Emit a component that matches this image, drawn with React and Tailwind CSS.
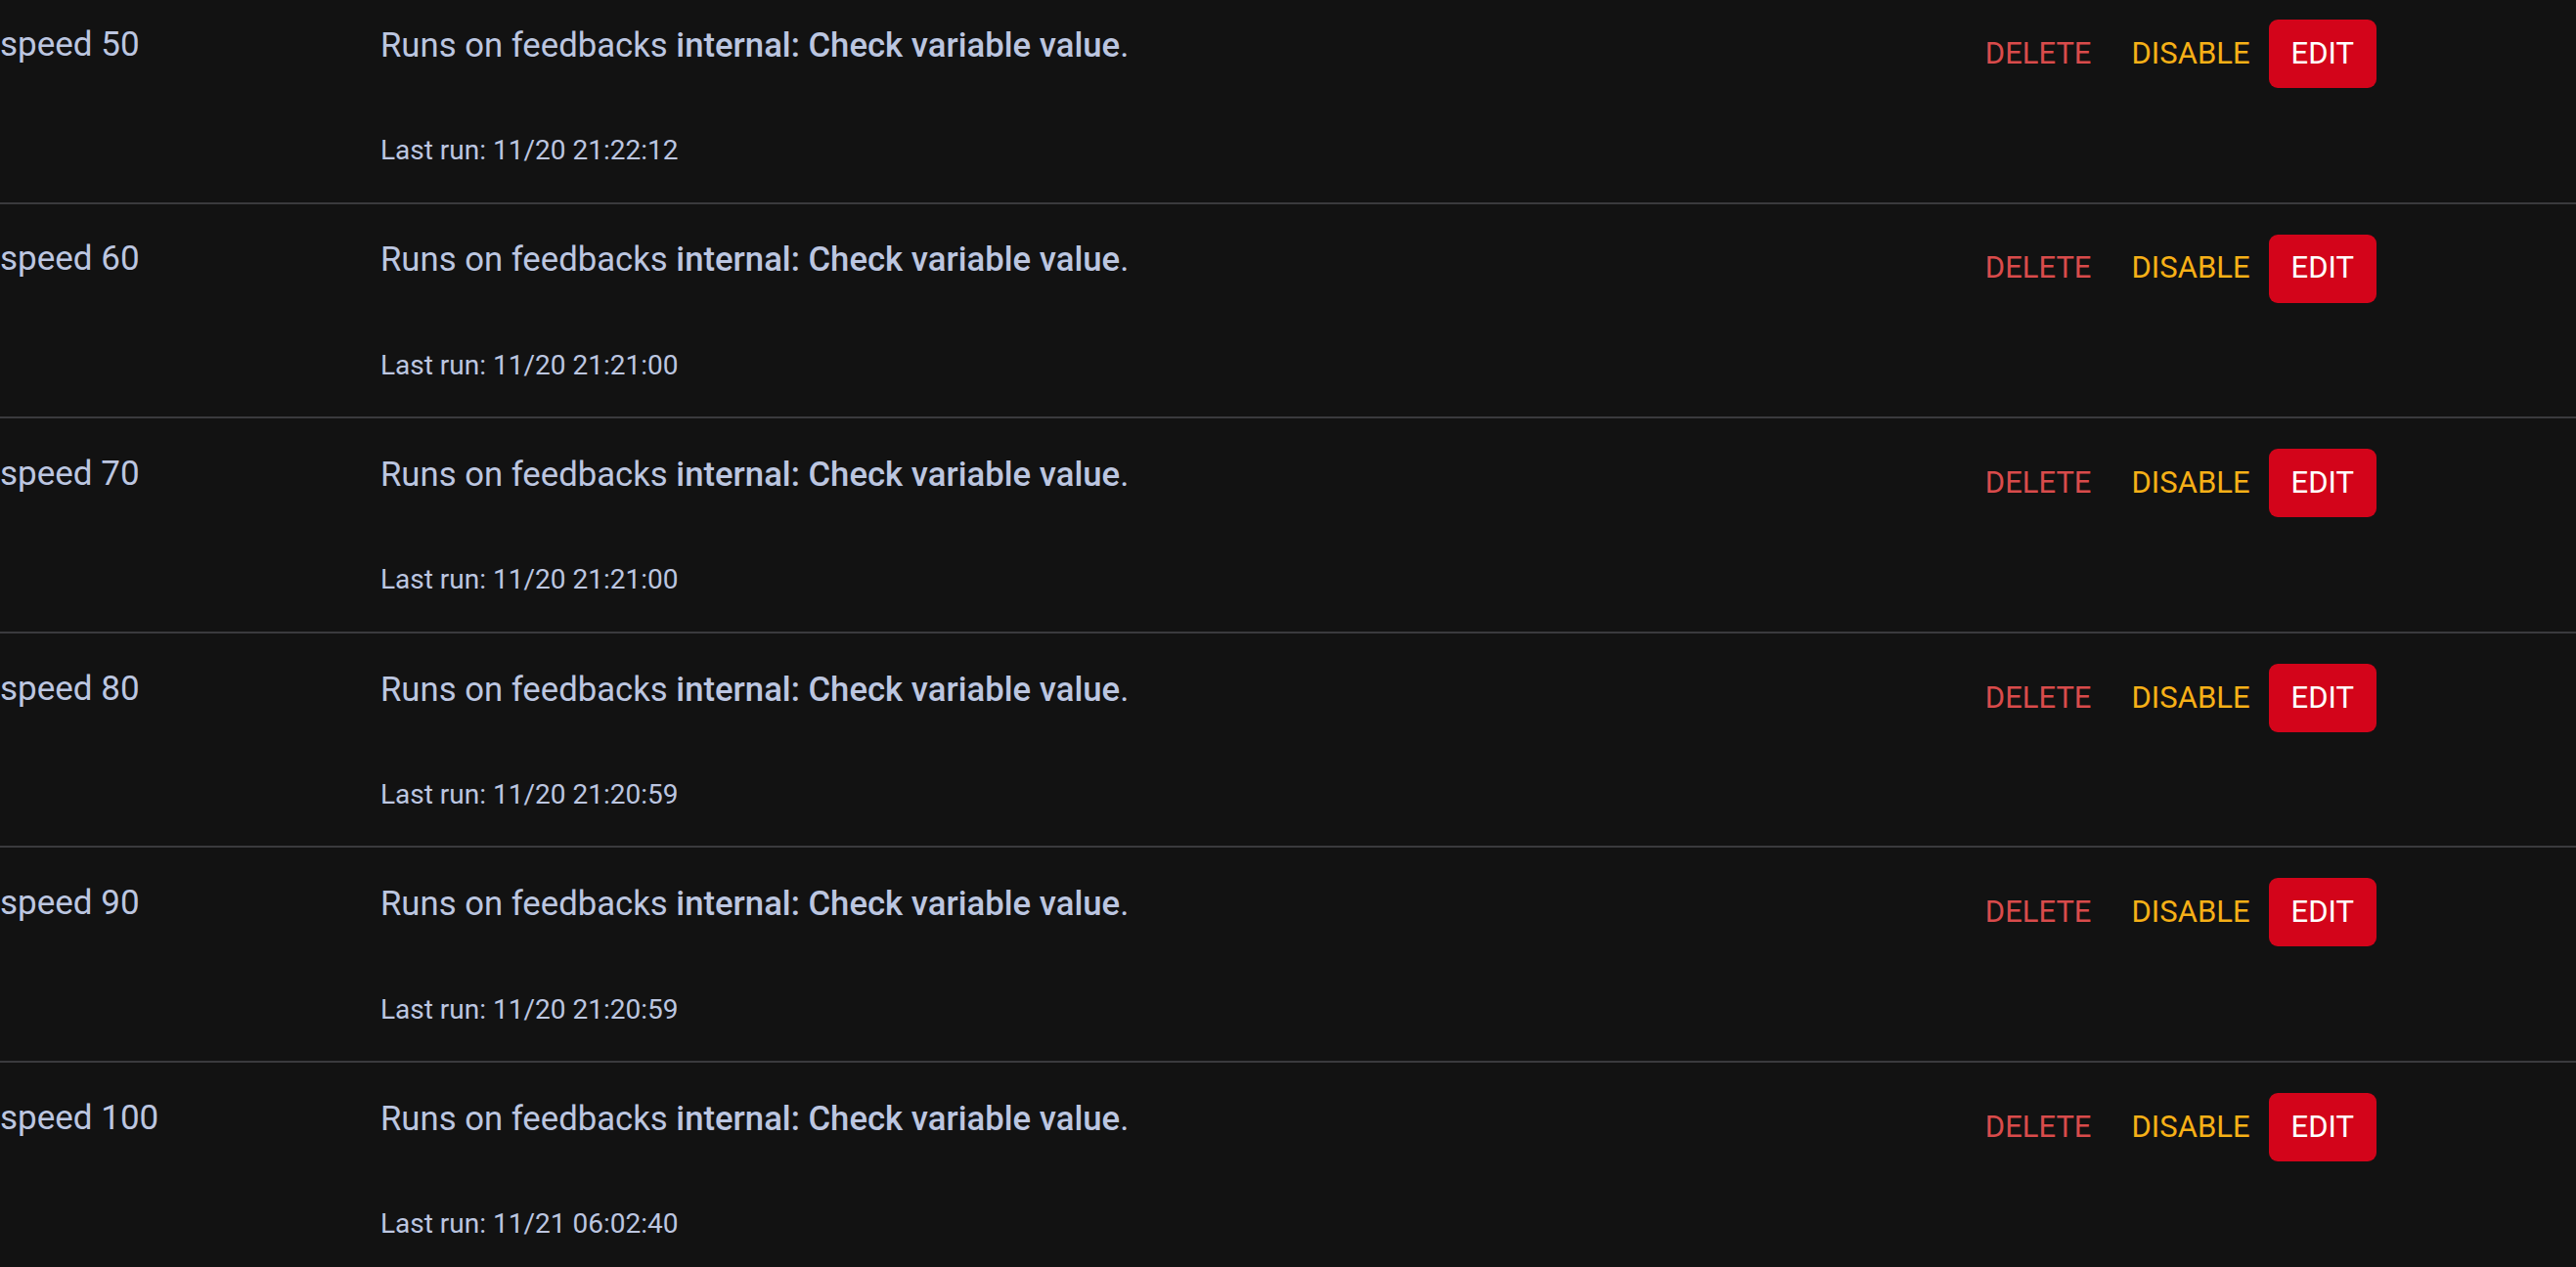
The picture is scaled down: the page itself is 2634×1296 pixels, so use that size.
import React from "react";

const rows = [
  { name: "speed 50", last: "11/20 21:22:12" },
  { name: "speed 60", last: "11/20 21:21:00" },
  { name: "speed 70", last: "11/20 21:21:00" },
  { name: "speed 80", last: "11/20 21:20:59" },
  { name: "speed 90", last: "11/20 21:20:59" },
  { name: "speed 100", last: "11/21 06:02:40" },
];

function Row({ name, last }) {
  return (
    <div className="flex h-[219.6px] border-b-2 border-[#3a3a3d]">
      <div className="w-[389px] shrink-0 pt-[36.9px] text-[35px] leading-[40px] text-[#bcc6e0]">
        {name}
      </div>
      <div className="flex-1 flex flex-col pt-[36.9px]">
        <div className="text-[34.7px] leading-[40px] text-[#bcc6e0]">
          Runs on feedbacks <span className="font-medium">internal: Check variable value</span>.
        </div>
        <div className="mt-[72.4px] text-[28px] leading-[32px] text-[#bcc6e0]">
          Last run: {last}
        </div>
      </div>
      <div className="flex items-start pt-[31px] pr-[204px]">
        <button className="h-[70px] flex items-center text-[31px] text-[#d94b4b]">
          DELETE
        </button>
        <button className="ml-[41px] h-[70px] flex items-center text-[31px] text-[#f6b017]">
          DISABLE
        </button>
        <button className="ml-[19px] h-[70px] px-[23px] rounded-[9px] bg-[#d3041a] flex items-center text-[31px] text-white">
          EDIT
        </button>
      </div>
    </div>
  );
}

export default function App() {
  return (
    <div
      className="w-full h-[1296px] overflow-hidden bg-[#121212]"
      style={{ fontFamily: "Roboto, 'Liberation Sans', sans-serif" }}
    >
      <div className="mt-[-11px]">
        {rows.map((r) => (
          <Row key={r.name} {...r} />
        ))}
      </div>
    </div>
  );
}
